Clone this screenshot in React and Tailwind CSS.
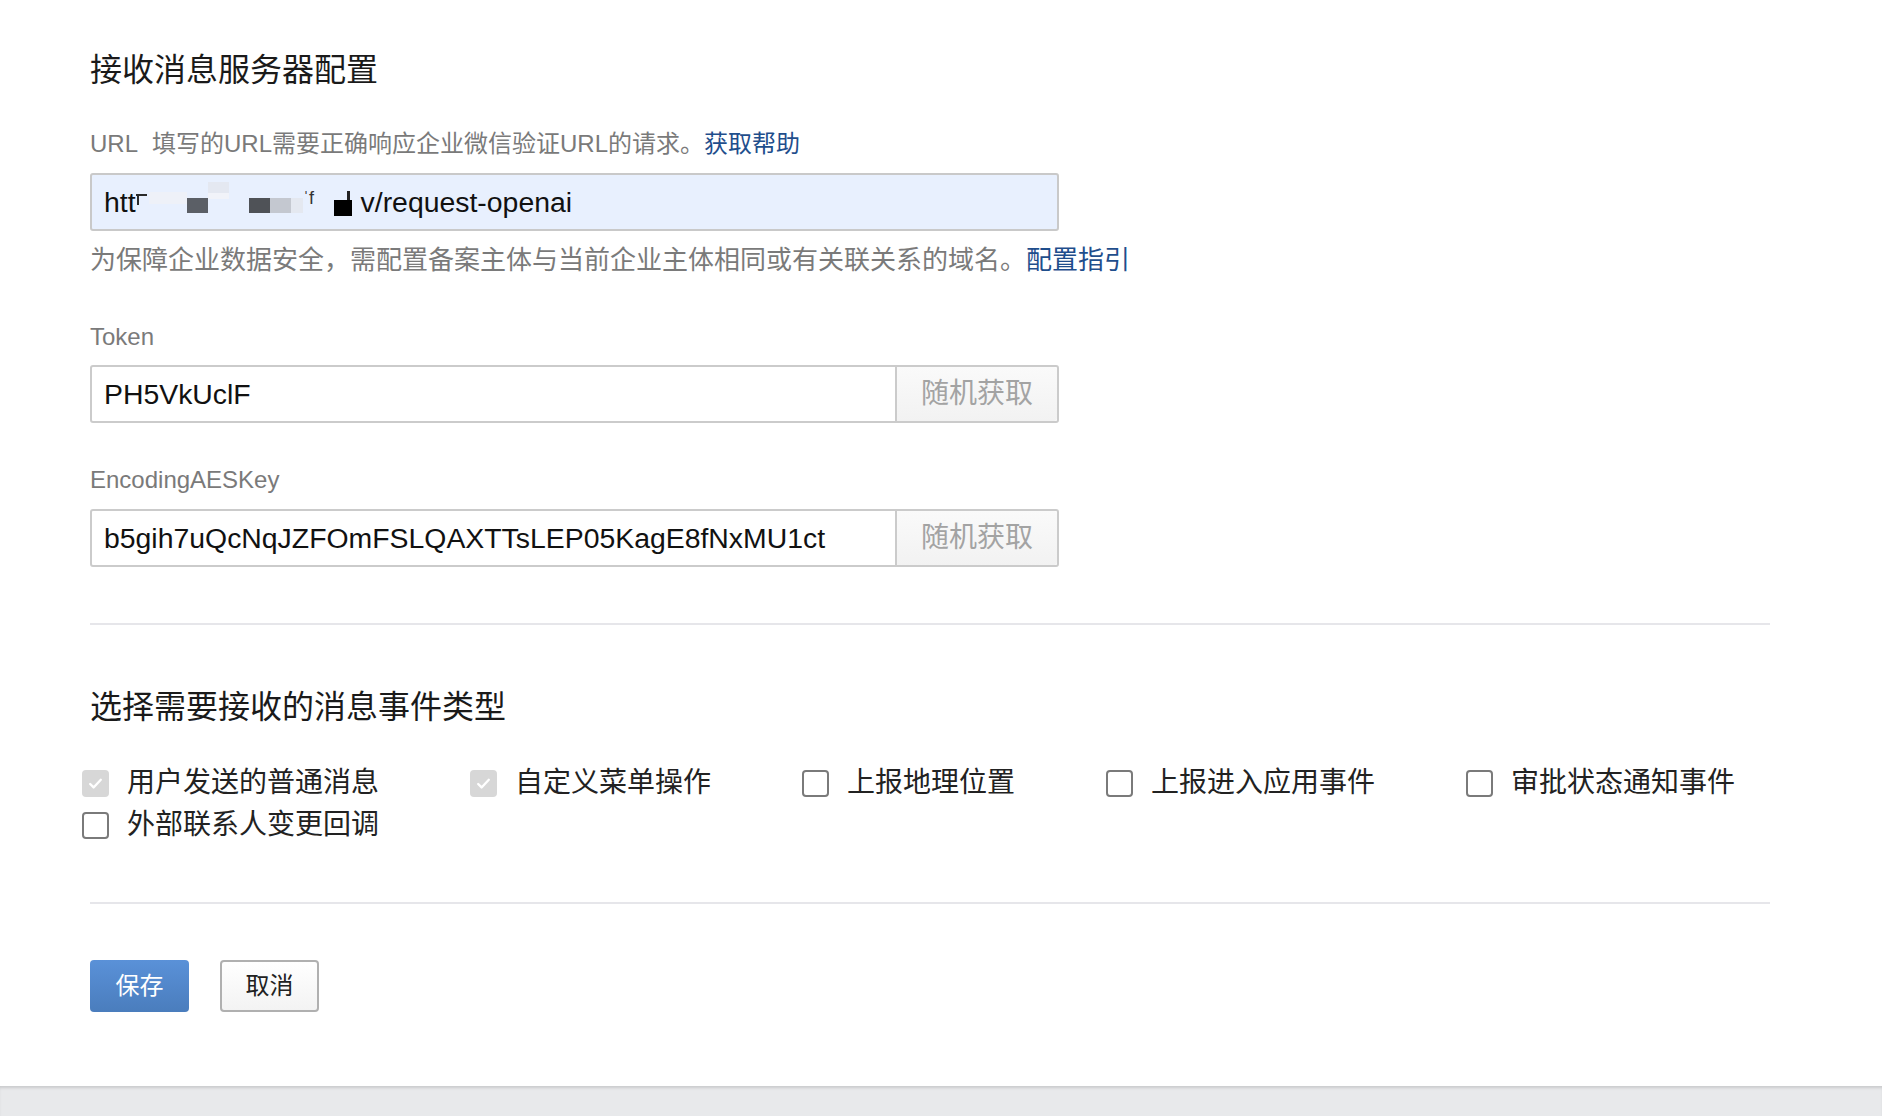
import React from 'react';

const events = [
  { label: '用户发送的普通消息', checked: true, disabled: true },
  { label: '自定义菜单操作', checked: true, disabled: true },
  { label: '上报地理位置', checked: false },
  { label: '上报进入应用事件', checked: false },
  { label: '审批状态通知事件', checked: false },
  { label: '外部联系人变更回调', checked: false },
];

// mosaic that hides the middle of the url
function Mosaic() {
  return (
    <svg width="228" height="56" viewBox="0 0 228 56" className="shrink-0">
      <rect x="0" y="20" width="11" height="2" fill="#2a2a2a" />
      <rect x="1" y="22" width="2" height="9" fill="#2a2a2a" />
      <rect x="13" y="18" width="38" height="12" fill="#eef1f8" />
      <rect x="51" y="24" width="21" height="15" fill="#5b5f66" />
      <rect x="72" y="8" width="21" height="11" fill="#e4e8f1" />
      <rect x="72" y="19" width="21" height="6" fill="#f1f3f9" />
      <rect x="113" y="24" width="21" height="15" fill="#4f5257" />
      <rect x="134" y="24" width="21" height="15" fill="#c4c8d0" />
      <rect x="155" y="24" width="12" height="15" fill="#e4e8f0" />
      <text x="167" y="30" fontSize="18" fill="#333" fontFamily="Liberation Sans, sans-serif">ˈf</text>
      <rect x="198" y="26" width="18" height="16" fill="#000" />
      <rect x="211" y="17" width="3" height="9" fill="#222" />
    </svg>
  );
}

function Checkbox({ checked }) {
  if (checked) {
    return (
      <span className="w-[27px] h-[27px] rounded-[4px] bg-[#d7d7d7] flex items-center justify-center shrink-0">
        <svg width="17" height="17" viewBox="0 0 16 16" fill="none">
          <path d="M3 8.5l3.2 3.2L13 4.5" stroke="#fff" strokeWidth="2.2" strokeLinecap="round" strokeLinejoin="round" />
        </svg>
      </span>
    );
  }
  return <span className="w-[27px] h-[27px] rounded-[4px] border-2 border-[#7a7a7a] bg-white shrink-0" />;
}

function KeyField({ value }) {
  return (
    <div className="flex w-[969px] h-[58px] border-2 border-[#cbcbcb] rounded-[3px] bg-white">
      <div className="flex-1 flex items-center pl-[12px] text-[28.4px] text-[#111]">{value}</div>
      <button className="w-[162px] border-l-2 border-[#cbcbcb] bg-gradient-to-b from-[#fafafa] to-[#f2f2f2] text-[28px] text-[#a3a3a3] rounded-r-[3px]">随机获取</button>
    </div>
  );
}

export default function App() {
  return (
    <div className="h-screen flex flex-col bg-white font-['Liberation_Sans','Noto_Sans_CJK_SC',sans-serif]">
      <div className="flex-1 pl-[90px] pr-[112px]">
        <h2 className="pt-[46px] text-[32px] leading-[48px] text-[#1a1a1a]">接收消息服务器配置</h2>

        <div className="mt-[32px] text-[24px] leading-[36px] text-[#7a7a7a] flex">
          <span>URL</span>
          <span className="ml-[14px]">填写的URL需要正确响应企业微信验证URL的请求。</span>
          <a className="text-[#1f4e8c]">获取帮助</a>
        </div>
        <div className="mt-[11px] w-[969px] h-[58px] border-2 border-[#c9c9c9] rounded-[3px] bg-[#e8f0fe] flex items-center pl-[12px] text-[28.4px] text-[#111]">
          <span>htt</span>
          <Mosaic />
          <span className="-ml-[3px]">v/request-openai</span>
        </div>
        <p className="mt-[11px] text-[26px] leading-[36px] text-[#7a7a7a]">
          为保障企业数据安全，需配置备案主体与当前企业主体相同或有关联关系的域名。<a className="text-[#1f4e8c]">配置指引</a>
        </p>

        <div className="mt-[41px] text-[24px] leading-[36px] text-[#7a7a7a]">Token</div>
        <div className="mt-[10px]"><KeyField value="PH5VkUclF" /></div>

        <div className="mt-[39px] text-[24px] leading-[36px] text-[#7a7a7a]">EncodingAESKey</div>
        <div className="mt-[11px]"><KeyField value="b5gih7uQcNqJZFOmFSLQAXTTsLEP05KagE8fNxMU1ct" /></div>

        <div className="mt-[56px] h-[2px] bg-[#e6e6ea]" />

        <h2 className="mt-[58px] text-[32px] leading-[48px] text-[#1a1a1a]">选择需要接收的消息事件类型</h2>
        <div className="mt-[31px] -ml-[8px] flex flex-wrap gap-x-[91px]">
          {events.map(e => (
            <label key={e.label} className="h-[42px] flex items-center gap-[18px] text-[28px] text-[#222]">
              <Checkbox checked={e.checked} />
              <span>{e.label}</span>
            </label>
          ))}
        </div>

        <div className="mt-[56px] h-[2px] bg-[#e6e6ea]" />

        <div className="mt-[56px] flex gap-[31px]">
          <button className="w-[99px] h-[52px] rounded-[4px] bg-gradient-to-b from-[#5a91d8] to-[#4a7dbd] text-white text-[24px]">保存</button>
          <button className="w-[99px] h-[52px] rounded-[4px] border-2 border-[#b0b0b0] bg-gradient-to-b from-white to-[#f3f3f3] text-[#222] text-[24px]">取消</button>
        </div>
      </div>
      <div className="h-[30px] bg-[#e8e9eb] shadow-[inset_0_3px_3px_-1px_rgba(0,0,0,0.13)]" />
    </div>
  );
}
